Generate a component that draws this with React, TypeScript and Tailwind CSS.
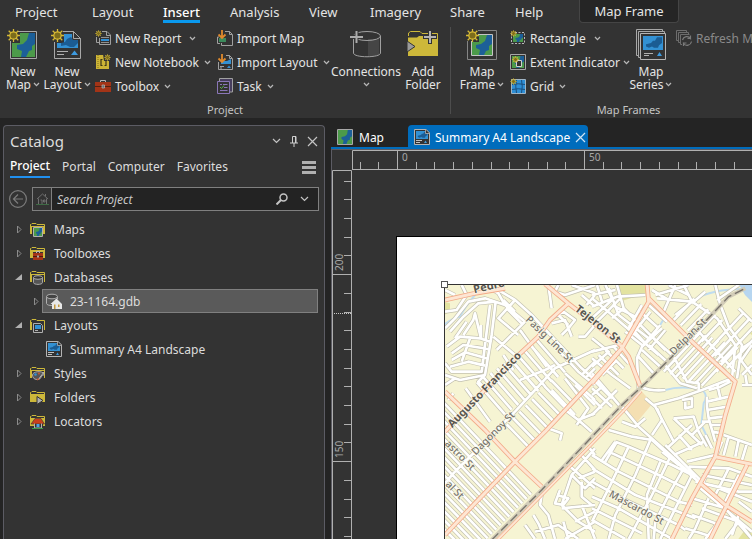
import type { ReactNode } from "react";

/* ---------- shared icon parts ---------- */

function Sun({ x, y, r }: { x: number; y: number; r: number }) {
  const o = r * 1.75;
  const d = r * 1.3;
  return (
    <g stroke="#d8bb35" strokeWidth={r * 0.34}>
      <path
        d={`M${x - o} ${y}H${x + o}M${x} ${y - o}V${y + o}M${x - d} ${y - d}L${x + d} ${y + d}M${x + d} ${y - d}L${x - d} ${y + d}`}
      />
      <circle cx={x} cy={y} r={r} fill="#7c6c1c" />
    </g>
  );
}

function Terrain({ x, y, w, h }: { x: number; y: number; w: number; h: number }) {
  return (
    <svg x={x} y={y} width={w} height={h} viewBox="0 0 20 20" preserveAspectRatio="none">
      <path fill="#4c9a4a" d="M0 0H20V20H0z" />
      <path fill="#1c5f98" d="M14 0H20V9L17 11V14L14 15L12 20H7L8 15L5 13V10L10 9L13 6z" />
    </svg>
  );
}

function Sea({ x, y, w, h }: { x: number; y: number; w: number; h: number }) {
  return (
    <svg x={x} y={y} width={w} height={h} viewBox="0 0 20 12" preserveAspectRatio="none">
      <path fill="#3391d3" d="M0 0H20V12H0z" />
      <path fill="#1b5c93" d="M14 1H19V6L16 8L15 10H11L9 9L6 10L3 9V7L8 6L10 4L12 4z" />
    </svg>
  );
}

function Icon({ size, children }: { size: 16 | 32; children: ReactNode }) {
  return (
    <svg
      className={size === 32 ? "h-8 w-8 shrink-0" : "h-4 w-4 shrink-0"}
      viewBox={size === 32 ? "0 0 32 32" : "0 0 16 16"}
      fill="none"
      aria-hidden="true"
    >
      {children}
    </svg>
  );
}

function Chevron({ className = "" }: { className?: string }) {
  return (
    <svg className={`inline-block h-[5px] w-[7px] shrink-0 ${className}`} viewBox="0 0 7 5" fill="none" aria-hidden="true">
      <path d="M1 1L3.5 3.6L6 1" stroke="#b8b8b8" strokeWidth="1.3" />
    </svg>
  );
}

/* ---------- ribbon icons ---------- */

const NewMapIcon = () => (
  <Icon size={32}>
    <path d="M11 2.500H29.500V29.500H3.500V12" stroke="#a8a8a8" />
    <path d="M13 4H28V28H5V14H13z" fill="#4c9a4a" />
    <path d="M22 4H28V15L25 17V21L22 22L19 28H14L15 22L10 20V16L16 15L20 11z" fill="#1c5f98" />
    <Sun x={6.5} y={6.5} r={3.7} />
  </Icon>
);

const NewLayoutIcon = () => (
  <Icon size={32}>
    <path d="M3.5 13V29.5H29.5V9.5L22.5 2.5H12" stroke="#a8a8a8" />
    <path d="M13 5H21V11H27V19H6V14H13z" fill="#3391d3" />
    <path d="M20 8L22 11H27V14L23 18H19L15 16L10 17V14L14 13L16 10z" fill="#1b5c93" />
    <path d="M22.5 2.5V9.5H29.5z" fill="#333" stroke="#a8a8a8" />
    <path d="M6 22.5H17M6 25.5H13" stroke="#b0b0b0" />
    <path d="M20 26L23.5 21.5L27 26z" fill="#3d9be0" />
    <Sun x={6.5} y={6.5} r={3.7} />
  </Icon>
);

const ConnectionsIcon = () => (
  <Icon size={32}>
    <path d="M18 10H29V25Q26 28 18 28z" fill="#454545" />
    <path d="M3.5 7V24C3.5 29 30.500 29 30.500 24V7" stroke="#a0a0a0" />
    <ellipse cx="17" cy="7" rx="13.500" ry="4.500" stroke="#a0a0a0" />
    <path d="M6.500 1V15M0 8H14" stroke="#333" strokeWidth="4" />
    <path d="M6.500 2V14M0 8H13" stroke="#ababab" strokeWidth="2" />
  </Icon>
);

const AddFolderIcon = () => (
  <Icon size={32}>
    <path d="M1 8.500H10L12 7H31V27H1z" fill="#cdb83a" />
    <path d="M1.500 7V4L3.500 2.500H13L15 4.500H30.500V8" stroke="#cdb83a" />
    <path d="M0 12L8 17.500L0 23z" fill="#9b9b9b" stroke="#333" />
    <path d="M23 1V15M16 8H30" stroke="#333" strokeWidth="4" />
    <path d="M23 2V14M17 8H29" stroke="#b5b5b5" strokeWidth="2" />
  </Icon>
);

const MapFrameIcon = () => (
  <Icon size={32}>
    <path d="M12 1.500H30.500V30.500H1.500V12" stroke="#858585" />
    <path d="M12 5.500H26.500V26.500H5.500V12" stroke="#c4c4c4" />
    <path d="M13 6H26V26H6V13H13z" fill="#4c9a4a" />
    <path d="M21 6H26V15L23 17V21L20 22L18 26H13L14 21L10 19V16L15 15L19 12z" fill="#1c5f98" />
    <Sun x={6.500} y={6.500} r={3.700} />
  </Icon>
);

const MapSeriesIcon = () => (
  <Icon size={32}>
    <path d="M4 26.500H1.500V.5H27.500V3M6 28.500H3.500V2.500H29.500V5" stroke="#a8a8a8" />
    <path d="M5.500 4.500H30.500V30.500H5.500z" fill="#333" stroke="#b4b4b4" />
    <Sea x={8} y={7} w={20} h={14} />
    <path d="M9 24.500H18M9 26.500H14" stroke="#b0b0b0" />
    <path d="M22 27L24.500 23L27 27z" fill="#3d9be0" />
  </Icon>
);

const ReportIcon = () => (
  <Icon size={16}>
    <path d="M4.500 8V14.500H15.500V5L12 1.500H7M1.500 7V12.500H4" stroke="#a0a0a0" />
    <path d="M11.500 1.500V5.500H15.500" stroke="#a0a0a0" />
    <path d="M6 7.500H14M6 12.500H14" stroke="#909090" />
    <path d="M6 9H14V11H6z" fill="#2f8fd6" />
    <Sun x={3.500} y={3.500} r={1.900} />
  </Icon>
);

const NotebookIcon = () => (
  <Icon size={16}>
    <path d="M1 1H14V15H1z" fill="#ccb436" />
    <path d="M3 1V15" stroke="#7c6c1c" strokeDasharray="1 1" />
    <path d="M7.500 5.500H6V11.500H7.500M9.500 5.500H11V11.500H9.500" stroke="#3a3519" strokeWidth="1.200" />
    <path d="M8 0H16V7H9z" fill="#333" />
    <Sun x={12.500} y={3.500} r={1.900} />
  </Icon>
);

const ToolboxIcon = () => (
  <Icon size={16}>
    <path d="M5.500 4V2.500H10.500V4" stroke="#b4b4b4" />
    <path d="M0 4H16V14H0z" fill="#a33417" />
    <path d="M0 8.500H16" stroke="#54200f" />
    <path d="M7 7H9.500V10H7z" fill="#6b6b6b" stroke="#b4b4b4" strokeWidth=".7" />
  </Icon>
);

const ImportArrow = () => <path d="M5 0V7M1.500 4.500L5 8L8.500 4.500" stroke="#e08a2c" strokeWidth="1.800" />;

const ImportMapIcon = () => (
  <Icon size={16}>
    <path d="M8 1.500H12.500L15.500 4.500V15.500H4.500V13M2 7H.5V13.500H3M12.500 1.500V4.500H15" stroke="#a0a0a0" />
    <path d="M2 8H9V12H2z" fill="#3c8a5c" />
    <ImportArrow />
  </Icon>
);

const ImportLayoutIcon = () => (
  <Icon size={16}>
    <path d="M9 1.500H12.500L15.500 4.500V15.500H1.500V8" stroke="#a0a0a0" />
    <path d="M4 7H10L14 5V10H4z" fill="#3391d3" />
    <path d="M12.500 1.500V4.500H15M3 12.500H7M3 14H5" stroke="#a0a0a0" />
    <path d="M10 14L12 11.500L14 14z" fill="#3391d3" />
    <ImportArrow />
  </Icon>
);

const TaskIcon = () => (
  <Icon size={16}>
    <path d="M2.500 3V.5H15.500V14H13" fill="#473e5d" stroke="#a0a0a0" />
    <path d="M.5 3.500H12.500V15.500H.5z" fill="#333" stroke="#8a76b8" />
    <path d="M6 6.500H10.500M7 9.500H10.500M3 12.500H10.500M3 6.500H5" stroke="#8a76b8" />
    <path d="M3 9L4.500 10.500L7 7.500" stroke="#5fae4f" />
  </Icon>
);

const RectangleIcon = () => (
  <Icon size={16}>
    <path d="M1.500 2.500H14.500V13.500H1.500z" stroke="#b8b8b8" strokeDasharray="2 1.500" />
    <Terrain x={3} y={4} w={10} h={8} />
    <Sun x={3.500} y={3.500} r={1.900} />
  </Icon>
);

const ExtentIcon = () => (
  <Icon size={16}>
    <path d="M.5.5H15.500V15.500H.5z" stroke="#a8a8a8" />
    <Terrain x={2} y={2} w={12} h={12} />
    <path d="M6.500 6.500H11.500V12.500H6.500z" fill="#333" stroke="#d0d0d0" />
    <Sun x={5.500} y={5.500} r={2} />
  </Icon>
);

const GridIcon = () => (
  <Icon size={16}>
    <path d="M1.500 1.500H15.500V15.500H1.500z" fill="#2f8fd6" stroke="#a0b4c4" />
    <path d="M2 6.500Q8 5 15 6.500M2 11.500Q8 10 15 11.500M6.500 2Q5 8 6.500 15M11.500 2Q13 8 11.500 15" stroke="#1b4f7d" />
    <Sun x={3.500} y={3.500} r={1.900} />
  </Icon>
);

const RefreshIcon = () => (
  <Icon size={16}>
    <path d="M2 10.500H.5V.5H10.500V2M4 12.500H2.500V2.500H12.500V4M6 14.500H4.500V4.500H13.500" stroke="#6d6d6d" />
    <path d="M6.500 10A4.500 4.500 0 0 1 14.500 8.500V5.500M14.500 8.500H11.500M15.500 11.500A4.500 4.500 0 0 1 7.500 13.500V16M7.500 13H10.500" stroke="#7a7a7a" strokeWidth="1.200" />
  </Icon>
);

/* ---------- catalog icons ---------- */

function FolderIcon({ children }: { children: ReactNode }) {
  return (
    <Icon size={16}>
      <path d="M.5 13V3.500H1L2 2.500H6L7 3.500H14.500V13" stroke="#cdb83a" />
      <path d="M0 5H15V13H0z" fill="#cdb83a" />
      {children}
    </Icon>
  );
}

const MapsFolder = () => (
  <FolderIcon>
    <path d="M2 6H13V15H2z" fill="#333" />
    <path d="M3.500 6.500H12.500V15.500H3.500z" stroke="#b0b0b0" />
    <Terrain x={4} y={7} w={8} h={8} />
  </FolderIcon>
);
const ToolsFolder = () => (
  <FolderIcon>
    <path d="M3 7H13V14H3z" fill="#333" />
    <path d="M6.500 8V6.500H9.500V8" stroke="#b8b8b8" />
    <path d="M3 8H13V15H3z" fill="#a33417" />
    <path d="M3 11.500H13" stroke="#4c1c0d" />
    <path d="M7 10.500H9V12.500H7z" fill="#aaa" />
  </FolderIcon>
);
const DataFolder = () => (
  <FolderIcon>
    <path d="M2 6H14V15H2z" fill="#333" />
    <path d="M3.500 8.500V13.500C3.500 16 12.500 16 12.500 13.500V8.500" fill="#555" stroke="#a8a8a8" />
    <ellipse cx="8" cy="8.500" rx="4.500" ry="1.800" fill="#333" stroke="#b0b0b0" />
  </FolderIcon>
);
const LayoutsFolder = () => (
  <FolderIcon>
    <path d="M2 5H14V15H2z" fill="#333" />
    <path d="M3.500 6.500H10.500L12.500 8.500V15.500H3.500z" fill="#333" stroke="#b0b0b0" />
    <path d="M5 8H11V12H5z" fill="#3391d3" />
    <path d="M5 13.500H8" stroke="#b0b0b0" />
  </FolderIcon>
);
const StylesFolder = () => (
  <FolderIcon>
    <path d="M2 6H14V15H2z" fill="#333" />
    <path d="M2.500 10C2.500 6 13 5.500 14 9C14.500 11 11 10 11 12C11 13 10 14.500 7 14.500C4 14.500 2.500 12.500 2.500 10z" fill="#555" stroke="#a8a8a8" />
    <circle cx="5.500" cy="9.500" r="1.300" fill="#3391d3" />
    <circle cx="9" cy="8.500" r="1" fill="#c85a30" />
    <path d="M8 15L14 7" stroke="#bdbdbd" />
    <path d="M7 15L9 13.500" stroke="#c85a30" strokeWidth="1.500" />
  </FolderIcon>
);
const PlainFolder = () => (
  <FolderIcon>
    <path d="M1 4.500H14" stroke="#333" />
    <path d="M7 7.500L13 11.500L7 15.500z" fill="#b0b0b0" stroke="#333" />
  </FolderIcon>
);
const LocatorsFolder = () => (
  <FolderIcon>
    <path d="M4 9H13V16H4z" fill="#333" />
    <path d="M1 11L5 5.500H11L14.500 11z" fill="#c8401c" stroke="#333" strokeWidth=".6" />
    <path d="M4.500 10.500V15H11.500V10.500" stroke="#b0b0b0" />
    <path d="M6.500 11H9.500V14H6.500z" fill="#4aa4e4" />
    <path d="M2 15.500H13" stroke="#3f9a4a" />
  </FolderIcon>
);
const HomeDatabase = () => (
  <Icon size={16}>
    <path d="M.5 3.500V10.500C1 12 3 12.500 6 12.500M11.500 3.500V6" stroke="#b0b0b0" />
    <ellipse cx="6" cy="3.500" rx="5.500" ry="2.300" fill="#444" stroke="#b0b0b0" />
    <path d="M4.500 11L10.500 5.500L16 11V16H6V11z" fill="#e8e8e8" />
    <path d="M8 16V11.500H9.500V16M12 11.500H13.500V14H12z" fill="#c49a40" />
  </Icon>
);
const LayoutIcon = () => (
  <Icon size={16}>
    <path d="M.5.5H12L15.500 4V15.500H.5z" fill="#333" stroke="#b4b4b4" />
    <Sea x={2} y={2} w={12} h={8} />
    <path d="M11.500 0V4.500H16z" fill="#333" stroke="#b4b4b4" strokeWidth=".8" />
    <path d="M2 11.500H8M2 13.500H6" stroke="#c0c0c0" />
    <path d="M10 14L11.500 11.500L13 14z" fill="#3d9be0" />
  </Icon>
);
const MapIcon = () => (
  <Icon size={16}>
    <path d="M.5.5H15.500V15.500H.5z" stroke="#a8a8a8" />
    <Terrain x={1} y={1} w={14} h={14} />
  </Icon>
);

/* ---------- ribbon ---------- */

const ribbonTabs = [
  { label: "Project", width: "w-[77px]" },
  { label: "Layout", width: "w-[71px]" },
  { label: "Insert", width: "w-[67px]" },
  { label: "Analysis", width: "w-[79px]" },
  { label: "View", width: "w-[61px]" },
  { label: "Imagery", width: "w-[80px]" },
  { label: "Share", width: "w-[65px]" },
  { label: "Help", width: "w-[64px]" },
];

function BigButton({ icon, lines, width, menu }: { icon: ReactNode; lines: string[]; width: string; menu?: boolean }) {
  return (
    <button type="button" className={`flex shrink-0 flex-col items-center ${width}`}>
      {icon}
      {lines.map((line, i) => (
        <span key={i} className={`flex h-[13px] items-center gap-[2px] whitespace-nowrap leading-[13px] ${i === 0 ? "mt-1" : ""}`}>
          {line}
          {menu && i === lines.length - 1 && <Chevron />}
        </span>
      ))}
    </button>
  );
}

function SmallButton({ icon, label, menu, off }: { icon: ReactNode; label: string; menu?: string; off?: boolean }) {
  return (
    <button
      type="button"
      disabled={off}
      className={`flex h-6 items-center whitespace-nowrap ${off ? "text-[#8a8a8a]" : ""}`}
    >
      {icon}
      <span className="ml-1 pt-[2px]">{label}</span>
      {menu && <Chevron className={menu} />}
    </button>
  );
}

function Ribbon() {
  return (
    <header className="h-[118px] overflow-hidden bg-[#333333] text-[#e4e4e4]">
      <nav className="flex h-[23px] pl-[15px] text-[13px] leading-[22px]">
        {ribbonTabs.map((tab) => (
          <div key={tab.label} className={`shrink-0 ${tab.width}`}>
            <button
              type="button"
              className={
                tab.label === "Insert"
                  ? "h-[23px] border-b-[3px] border-[#0a99ee] pt-px font-medium text-white"
                  : "h-[23px] border-b-[3px] border-transparent pt-px"
              }
            >
              {tab.label}
            </button>
          </div>
        ))}
        <button type="button" className="h-[23px] w-[100px] shrink-0 rounded-b border border-t-0 border-[#454545] bg-[#252525]">
          Map Frame
        </button>
      </nav>
      <div className="flex">
        <section className="w-[450px] shrink-0 pt-[6px]" aria-label="Project tools">
          <div className="flex h-[74px] pl-px">
            <BigButton icon={<NewMapIcon />} lines={["New", "Map"]} width="w-[44px]" menu />
            <BigButton icon={<NewLayoutIcon />} lines={["New", "Layout"]} width="w-[44px]" menu />
            <div className="-mt-[3px] ml-[6px] w-[122px] shrink-0">
              <SmallButton icon={<ReportIcon />} label="New Report" menu="ml-2" />
              <SmallButton icon={<NotebookIcon />} label="New Notebook" menu="ml-[5px]" />
              <SmallButton icon={<ToolboxIcon />} label="Toolbox" menu="ml-[5px]" />
            </div>
            <div className="-mt-[3px] w-[115px] shrink-0">
              <SmallButton icon={<ImportMapIcon />} label="Import Map" />
              <SmallButton icon={<ImportLayoutIcon />} label="Import Layout" menu="ml-[5px]" />
              <SmallButton icon={<TaskIcon />} label="Task" menu="ml-[5px]" />
            </div>
            <BigButton icon={<ConnectionsIcon />} lines={["Connections", ""]} width="w-[68px]" menu />
            <BigButton icon={<AddFolderIcon />} lines={["Add", "Folder"]} width="w-[46px]" />
          </div>
          <h2 className="text-center text-[11px] leading-[14px] text-[#c4c4c4]">Project</h2>
        </section>
        <section className="flex w-[356px] shrink-0" aria-label="Map frame tools">
          <div className="mt-1 h-[87px] w-px shrink-0 bg-[#4d4d4d]" />
          <div className="flex-1 pt-[6px]">
            <div className="flex h-[74px] pl-[8px]">
              <BigButton icon={<MapFrameIcon />} lines={["Map", "Frame"]} width="w-[46px]" menu />
              <div className="-mt-[3px] ml-[5px] w-[118px] shrink-0">
                <SmallButton icon={<RectangleIcon />} label="Rectangle" menu="ml-2" />
                <SmallButton icon={<ExtentIcon />} label="Extent Indicator" menu="ml-[3px]" />
                <SmallButton icon={<GridIcon />} label="Grid" menu="ml-[5px]" />
              </div>
              <BigButton icon={<MapSeriesIcon />} lines={["Map", "Series"]} width="w-[46px]" menu />
              <div className="-mt-[3px] ml-[2px]">
                <SmallButton icon={<RefreshIcon />} label="Refresh Map Series" off />
              </div>
            </div>
            <h2 className="text-center text-[11px] leading-[14px] text-[#c4c4c4]">Map Frames</h2>
          </div>
        </section>
      </div>
    </header>
  );
}

/* ---------- catalog pane ---------- */

type Node = { label: string; icon: ReactNode; open?: boolean; leaf?: boolean; child?: boolean; selected?: boolean };

const nodes: Node[] = [
  { label: "Maps", icon: <MapsFolder /> },
  { label: "Toolboxes", icon: <ToolsFolder /> },
  { label: "Databases", icon: <DataFolder />, open: true },
  { label: "23-1164.gdb", icon: <HomeDatabase />, child: true, selected: true },
  { label: "Layouts", icon: <LayoutsFolder />, open: true },
  { label: "Summary A4 Landscape", icon: <LayoutIcon />, child: true, leaf: true },
  { label: "Styles", icon: <StylesFolder /> },
  { label: "Folders", icon: <PlainFolder /> },
  { label: "Locators", icon: <LocatorsFolder /> },
];

function Catalog() {
  return (
    <aside className="ml-[3px] w-[322px] shrink-0 rounded-t border border-b-0 border-[#5c5c64] bg-[#333333] text-[#dcdcdc]">
      <div className="flex h-[30px] items-center pl-[6px] pr-[6px]">
        <h1 className="flex-1 text-[15px]">Catalog</h1>
        <button type="button" aria-label="Pane options" className="flex w-[18px] items-center">
          <svg className="h-[6px] w-[9px]" viewBox="0 0 9 6" fill="none"><path d="M1 1L4.500 4.500L8 1" stroke="#c4c4c4" strokeWidth="1.200" /></svg>
        </button>
        <button type="button" aria-label="Pin pane" className="w-[17px]">
          <svg className="h-[11px] w-[8px]" viewBox="0 0 8 11" fill="none"><path d="M2.500 7V.5H6V7M0 7H8M4 7V11M5.500 1V7" stroke="#d0d0d0" /></svg>
        </button>
        <button type="button" aria-label="Close pane">
          <svg className="h-[11px] w-[11px]" viewBox="0 0 11 11" fill="none"><path d="M1 1L10 10M10 1L1 10" stroke="#c4c4c4" strokeWidth="1.200" /></svg>
        </button>
      </div>
      <div className="flex h-[22px] items-start justify-between pl-[6px] pr-[8px] text-[12px] leading-[20px]">
        <nav className="flex gap-3">
          <button type="button" className="h-[22px] border-b-2 border-[#2090f0] font-medium text-white">Project</button>
          <button type="button" className="h-[22px]">Portal</button>
          <button type="button" className="h-[22px]">Computer</button>
          <button type="button" className="h-[22px]">Favorites</button>
        </nav>
        <button type="button" aria-label="Menu" className="mt-[5px]">
          <svg className="h-[13px] w-[14px]" viewBox="0 0 14 13" aria-hidden="true"><path d="M0 1.500H14M0 6.500H14M0 11.500H14" stroke="#b0b0b0" strokeWidth="3" /></svg>
        </button>
      </div>
      <div className="mt-[9px] flex items-center gap-[5px] pl-[5px] pr-[5px]">
        <button type="button" aria-label="Back">
          <svg className="h-[18px] w-[18px]" viewBox="0 0 18 18" fill="none" stroke="#7c7c7c" strokeWidth="1.200"><circle cx="9" cy="9" r="8.400" /><path d="M14 9H5M9 4.500L4.500 9L9 13.500" /></svg>
        </button>
        <div className="flex h-6 flex-1 border border-[#808080] bg-[#232323]">
          <button type="button" aria-label="Home" className="flex w-[19px] items-center justify-center border-r border-[#808080] bg-[#333333]">
            <svg className="h-[12px] w-[13px]" viewBox="0 0 13 12" fill="none" stroke="#6f6f6f"><path d="M1 6L6.500 1L12 6M2.500 5.500V11M10.500 5.500V11M9.500 1V3" /><path d="M4.500 7H6V11M7.500 7H9V9H7.500z" /><path d="M0 11.500H13" stroke="#3f6b45" /></svg>
          </button>
          <input
            aria-label="Search Project"
            placeholder="Search Project"
            className="w-0 flex-1 bg-transparent px-[5px] pt-[2px] text-[12px] italic outline-none placeholder:text-[#c8c8c8]"
          />
          <button type="button" aria-label="Search" className="w-[24px]">
            <svg className="h-[12px] w-[12px]" viewBox="0 0 12 12" fill="none" stroke="#c4c4c4"><circle cx="7.500" cy="4.500" r="3.500" strokeWidth="1.500" /><path d="M5 7L.5 11.500" strokeWidth="2" /></svg>
          </button>
          <button type="button" aria-label="Search options" className="w-[18px]">
            <svg className="h-[6px] w-[9px]" viewBox="0 0 9 6" fill="none"><path d="M1 1L4.500 4.500L8 1" stroke="#c4c4c4" strokeWidth="1.200" /></svg>
          </button>
        </div>
      </div>
      <ul className="mt-[6px] pr-[6px] text-[12px]">
        {nodes.map((n) => (
          <li key={n.label} className={`flex h-6 items-center ${n.child ? "pl-[28px]" : "pl-[11px]"}`}>
            <span className="w-[10px] shrink-0">
              {!n.leaf && (
                <svg className="h-[9px] w-[8px]" viewBox="0 0 8 9" fill="none" aria-hidden="true">
                  {n.open ? <path d="M7 1V7H0z" fill="#b0b0b0" /> : <path d="M2.500 1V8L6 4.500z" stroke="#8c8c8c" />}
                </svg>
              )}
            </span>
            <button
              type="button"
              className={`flex h-6 flex-1 items-center gap-2 border ${n.child ? "pl-[3px]" : "pl-[4px]"} ${
                n.selected ? "border-[#808080] bg-[#5a5a5a]" : "border-transparent"
              }`}
            >
              {n.icon}
              <span className="pt-[2px]">{n.label}</span>
            </button>
          </li>
        ))}
      </ul>
    </aside>
  );
}

/* ---------- rulers ---------- */

const step = 18.7;
const marks = Array.from({ length: 90 }, (_, i) => i - 2);

function TopRuler() {
  return (
    <svg className="h-5 w-full" aria-hidden="true">
      <path d="M.5 19.500V.5H4000M0 19.500H4000" stroke="#b0b0b0" fill="none" />
      {marks.map((i) => {
        const x = Math.round(45 + i * step) + 0.5;
        return <path key={i} d={i % 10 === 0 ? `M${x} 1V19` : `M${x} 12V19`} stroke="#b0b0b0" />;
      })}
      <g fontSize="10" fill="#a8a8a8">
        <text x="50" y="11">0</text>
        <text x="237" y="11">50</text>
      </g>
    </svg>
  );
}

function SideRuler() {
  return (
    <svg className="h-full w-5" aria-hidden="true">
      <path d="M.5 3000V.5H19.500V3000" stroke="#b0b0b0" fill="none" />
      {marks.map((i) => {
        const y = Math.round(48 + i * step) + 0.5;
        return <path key={i} d={(i + 7) % 10 === 0 ? `M1 ${y}H19` : `M12 ${y}H19`} stroke="#b0b0b0" />;
      })}
      <path d="M2 143.500H19" stroke="#c8c8c8" strokeDasharray="1 1" />
      <g fontSize="10" fill="#a8a8a8">
        <text transform="translate(11 101) rotate(-90)">200</text>
        <text transform="translate(11 288) rotate(-90)">150</text>
      </g>
    </svg>
  );
}

/* ---------- street map ---------- */

/* Evenly spaced parallel streets: first start point, shift per street, street vector. */
function rows(n: number, x: number, y: number, sx: number, sy: number, dx: number, dy: number) {
  return Array.from({ length: n }, (_, i) => `M${x + i * sx} ${y + i * sy}l${dx} ${dy}`).join("");
}

/* Streets running from the western edge down to the railway. */
const edgeToRail = Array.from({ length: 15 }, (_, i) => {
  const y0 = 383 + i * 27;
  const x1 = Math.round((980 - y0) / 2.07);
  return `M26 ${y0}L${x1} ${Math.round(y0 + 1.07 * (x1 - 30))}`;
}).join("");

const westStreets = [
  rows(10, 126, 322, 20, -14, 84, 96),
  rows(8, 215, 448, 19, -19, 64, 66),
  edgeToRail,
  "M92 340L165 440M55 355L40 375",
  "M30 625L55 595L110 540L240 410L300 345L360 280L480 225",
  "M255 315L330 285L360 270M390 295L480 375",
  "M30 300L75 315L150 300L170 180L182 80M30 265L50 290L140 290L165 90",
  "M30 160L60 130L100 80L150 70L210 90M45 170L85 125L130 85L180 80",
  "M35 215L75 185L135 190L165 200M50 235L85 210L160 222M50 255L90 232L155 250M45 275L100 260L150 272",
  "M85 180L115 135L120 115L138 190M138 150V188M60 190L95 140M105 190L80 260",
  "M30 110L65 105L95 60L80 30M30 45L60 60M150 30L190 55L210 90L270 140M165 30L240 75L290 120",
  "M205 75L240 110M270 140L185 225M240 75L190 130L250 180M215 100L265 150M175 185L240 240M205 240L235 285M255 165L335 275",
  "M340 30L350 100M370 30L360 50L390 60L480 30M440 60L480 95M430 185H450L480 150M455 90L480 60M410 30L480 55",
  "M350 130L385 110L420 135L400 160L380 180M350 145L390 135L410 185M370 120L400 150",
  "M290 120L440 280L480 315M350 345L420 420M370 225L430 290L480 330M440 300L480 260M450 310L480 280M465 320L480 300M390 310L460 400L425 450M420 330L480 390",
  "M385 400L430 435L470 470M430 435L480 415M345 462L380 475L375 497",
  "M400 570L480 640M435 535L480 585M460 515L480 540M480 520L410 600L380 690L430 740L480 770",
  "M365 660L400 670L385 690L360 685L375 645M430 610L480 590M410 600L450 640L480 610M440 620V665L470 690",
  "M320 660L315 690L340 720L360 792M295 720L310 745L330 792M270 750L300 792M380 700L480 690M420 740L480 710",
  "M300 770L370 750L430 792M385 740L400 792M390 792L480 740M440 690L480 792M150 300L130 320L150 340M60 310L30 330",
].join("");

const eastStreets = [
  "M0 70L60 120L130 180L200 240M0 95L75 65L160 60M0 60L70 45M40 30L60 70M75 30L95 100L60 130M15 30L30 80M0 130L60 75M0 155L85 70",
  "M60 90L130 125M95 100L220 225M50 40L80 120L170 190M0 230L80 210M0 250L60 300L115 340M20 240L80 300M40 225L95 280M65 215L110 265M0 295L90 400M10 320L60 370M0 190L50 230L0 275M30 300L70 260",
  "M0 340L60 395M0 370L30 400M0 420L75 345M25 340L0 360M100 170L150 210M110 150L160 205M145 110L200 160M170 90L225 140M150 215L205 150M170 225L220 165M120 180L175 110M110 160L150 90",
  "M140 345L135 250L150 215L210 160M135 240L185 295M150 225L205 275M170 210L225 260M185 190L240 240M195 70L300 80L375 130L430 210L420 310",
  rows(7, 215, 290, 19, 7, 108, -116),
  rows(5, 245, 135, 21, 16, 62, -64),
  rows(4, 350, 225, 18, 18, 105, -112),
  "M215 265L265 325L315 340M245 245L285 320L320 325V345M320 170L430 290M250 30L215 110M275 30L300 80L250 120M230 30L290 60M190 60L290 30M180 45L230 75",
  "M340 50L300 85M370 30L385 90L410 155L450 210L435 310M375 75L440 30M440 100L480 140M450 220L480 200M445 260L480 210M450 300L480 270M435 240L480 300M450 330H480M460 300L465 330",
  "M360 250L400 290M385 265L375 290",
  "M145 335Q180 350 220 345M185 390L260 370L330 345L415 312M160 370L190 395L245 500M195 400L210 435L180 480M90 440L130 455L160 430",
  "M50 465L120 485L180 495L240 550L330 630M90 395L140 455L235 540L310 610M220 510L330 620M245 430L305 425L320 470L345 515M245 430L330 510M230 515L300 450M245 540L335 500M260 480L300 525M210 530L260 570M285 560L370 540",
  "M270 375L300 370V395L280 400V380M345 365V395L350 430L370 500M350 345L385 335L415 320M375 325L385 370M345 380L410 365M345 405L405 395M350 430L395 425M355 450L392 450M360 470L390 475M330 440H350M340 480L360 520M300 480L340 440",
  "M395 480L480 510M390 500L370 550M410 485L395 540M440 495L430 545M465 505L450 555M290 575L410 580L480 605M330 600L480 630M310 620L440 650L480 650M410 580L370 660M440 600L400 680M350 585L330 630M380 640L480 680M440 680L480 710",
  "M70 500L110 515L240 570L300 600M0 540L80 590L260 680L300 690M50 530L200 600L280 640M0 580L130 660L310 730M0 620L90 670L260 750L280 765M0 665L80 700L240 792M0 700L150 775M0 735L100 792M70 500L30 555",
  "M75 500L40 560M110 515L60 620L20 700L0 740M175 495L130 600L70 720L50 792M235 545L180 660L110 792M205 560L165 660L170 792M275 580L235 650L190 740L185 792M300 600L250 700L205 792",
  "M325 640L480 770M300 670L400 700L480 792M330 700L440 740L400 792M440 740L480 792M300 720L370 745M280 760L360 785M350 670L310 760L290 792M380 740L340 792M440 720L420 780",
].join("");

const westMain = [
  "M30 470L130 365L240 250L310 185L345 135L400 85M330 27L400 85L471 140L556 210",
  "M30 350L150 465L240 560L320 635M30 780L110 695L240 560L330 470L480 310L556 225",
  "M30 75L120 55L210 40",
].join("");

const eastMain = [
  "M0 325L90 220L170 80L165 25M85 210L110 245L145 335",
  "M170 70L230 130L300 200L430 320L400 420L370 545L300 670L240 792",
  "M370 545L480 568M325 625L400 690L480 740M465 570L405 690L355 792",
].join("");

const rail = "M170 795L320 645L471 485L561 390L631 325L711 245L801 150L881 65L931 40";

function Both({ west, east, color, width }: { west: string; east: string; color: string; width: number }) {
  return (
    <g stroke={color} strokeWidth={width} fill="none" strokeLinejoin="round">
      <path d={west} />
      <path d={east} transform="translate(471 0)" />
    </g>
  );
}

const labels = [
  { text: "Pedro", x: 118, y: 55, angle: -13, bold: true },
  { text: "Augusto Francisco", x: 52, y: 460, angle: -46, bold: true },
  { text: "Pasig Line St", x: 270, y: 136, angle: 44 },
  { text: "Dagonoy St", x: 122, y: 542, angle: -45 },
  { text: "astro St", x: 28, y: 508, angle: 45 },
  { text: "al St", x: 30, y: 630, angle: 45 },
  { text: "Tejeron St", x: 418, y: 106, angle: 38, bold: true },
  { text: "Delpan St", x: 716, y: 242, angle: -45 },
  { text: "Mascardo St", x: 520, y: 664, angle: 28 },
];

function StreetMap() {
  return (
    <svg className="h-full w-full" viewBox="30 30 921 762" preserveAspectRatio="xMinYMin slice" role="img" aria-label="Street map">
      <path d="M0 0H2000V2000H0z" fill="#f6f4d3" />
      <path d="M551 27H636V55L560 78zM27 80L45 85L45 110L27 120zM910 792L930 765L960 780V800zM945 175L960 165V190z" fill="#e3e3a0" />
      <path d="M621 350L653 385L606 442L563 400z" fill="#f4dfb2" />
      <path d="M27 240V150Q50 130 75 125Q90 95 120 60M691 345Q741 330 801 345Q821 360 806 385L799 450L821 495M776 75Q831 42 926 42M661 175L690 125" stroke="#bfdcf0" strokeWidth="6" fill="none" />
      <path d="M911 27H955V85L930 60z" fill="#b7d6f0" />
      <Both west={westStreets} east={eastStreets} color="#c3c1b0" width={12} />
      <Both west={westStreets} east={eastStreets} color="#ffffff" width={8} />
      <Both west={westMain} east={eastMain} color="#f3aa88" width={14} />
      <Both west={westMain} east={eastMain} color="#fde6d3" width={9} />
      <path d="M185 797L325 655L480 497L571 402L618 348" stroke="#f3aa88" strokeWidth="10" fill="none" />
      <path d="M185 797L325 655L480 497L571 402L618 348" stroke="#fde6d3" strokeWidth="6" fill="none" />
      <path d={rail} stroke="#d2ccb8" strokeWidth="12" fill="none" />
      <path d={rail} stroke="#77736b" strokeWidth="4" strokeDasharray="28 12" fill="none" />
      {labels.map((l) => (
        <text
          key={l.text}
          transform={`translate(${l.x} ${l.y}) rotate(${l.angle})`}
          fontSize={l.bold ? 33 : 31}
          fontWeight={l.bold ? 700 : 500}
          fill={l.bold ? "#5b5750" : "#77736a"}
          stroke="#fbfaea"
          strokeWidth="4"
          paintOrder="stroke"
        >
          {l.text}
        </text>
      ))}
    </svg>
  );
}

/* ---------- document area ---------- */

function LayoutView() {
  return (
    <main className="ml-[6px] flex min-w-0 flex-1 flex-col">
      <div className="flex h-[24px] items-stretch border-b-2 border-[#006cbc] pl-[6px] text-[12px] text-white">
        <button type="button" className="flex w-[71px] shrink-0 items-center gap-[6px] whitespace-nowrap pt-[2px]">
          <MapIcon />
          <span className="pt-px">Map</span>
        </button>
        <div className="flex w-[180px] shrink-0 items-center gap-[5px] whitespace-nowrap rounded-t bg-[#006cbc] pl-[6px] pt-[2px]">
          <LayoutIcon />
          <button type="button" className="flex-1 pt-px text-left">Summary A4 Landscape</button>
          <button type="button" aria-label="Close tab" className="pr-[6px]">
            <svg className="h-[11px] w-[11px]" viewBox="0 0 11 11" fill="none"><path d="M1 1L10 10M10 1L1 10" stroke="#cfe4f5" strokeWidth="1.200" /></svg>
          </button>
        </div>
      </div>
      <div className="grid flex-1 grid-cols-[20px_minmax(0,1fr)] grid-rows-[20px_minmax(0,1fr)] border-l border-t border-[#5c5c64] bg-[#333333]">
        <div />
        <TopRuler />
        <SideRuler />
        <div className="flex overflow-hidden pl-[44px] pt-[66px]">
          <div className="flex flex-1 border-l border-t border-black bg-white pl-[47px] pt-[47px]">
            <div className="relative flex-1 border-l border-t border-[#333333]">
              <StreetMap />
              <span className="absolute -left-1 -top-1 h-[7px] w-[7px] border border-[#555555] bg-white" />
            </div>
          </div>
        </div>
      </div>
    </main>
  );
}

export default function App() {
  return (
    <div className="flex h-screen flex-col overflow-hidden bg-[#242424] font-['Noto_Sans','Open_Sans',sans-serif] text-[12px]">
      <Ribbon />
      <div className="flex min-h-0 flex-1 pt-[7px]">
        <Catalog />
        <LayoutView />
      </div>
    </div>
  );
}
